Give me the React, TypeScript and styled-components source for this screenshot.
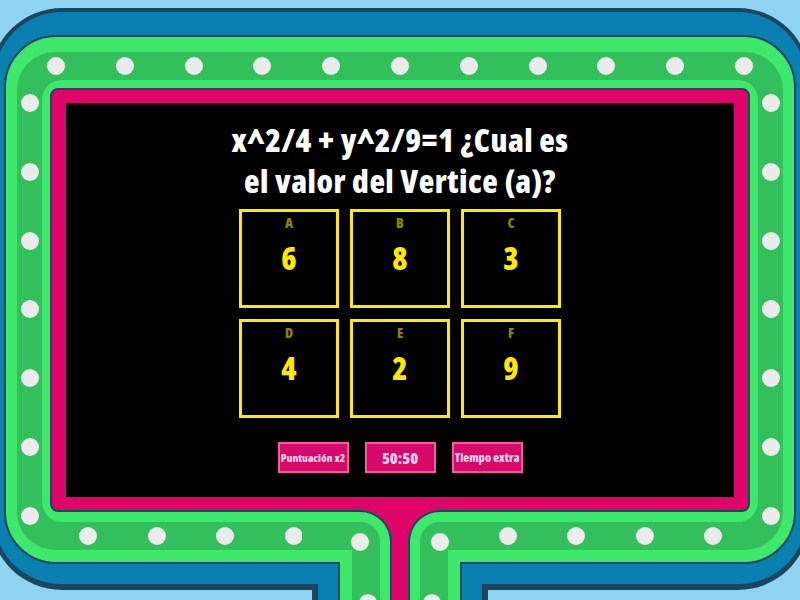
import React from 'react';
import styled, {createGlobalStyle} from "styled-components";

const GlobalStyle = createGlobalStyle`
  html, body {
    margin: 0;
    padding: 0;
    width: 800px;
    height: 600px;
    overflow: hidden;
    background: #8fd3f0;
  }
  * {
    box-sizing: border-box;
  }
`

const FONT = `"Open Sans", "DejaVu Sans", sans-serif`

const OUTLINE = '#1b4660'
const BLUE = '#0a80b1'
const LIGHT_GREEN = '#3de86a'
const DARK_GREEN = '#33bf5b'
const PINK = '#df0469'
const DOT = '#ebebeb'

type AnswerType = {
    letter: string
    value: string
}

const answers: AnswerType[] = [
    {letter: 'A', value: '6'},
    {letter: 'B', value: '8'},
    {letter: 'C', value: '3'},
    {letter: 'D', value: '4'},
    {letter: 'E', value: '2'},
    {letter: 'F', value: '9'},
]

const range = (n: number) => Array.from({length: n}, (_, i) => i)

// bottom centre: the pink stem going down between the two green legs
const pinkEdge = 'M 200 510 L 360 510 A 32 32 0 0 1 392 542 L 392 700 L 408 700 L 408 542 A 32 32 0 0 1 440 510 L 600 510'
const pinkFill = 'M 200 480 L 200 510 L 360 510 A 32 32 0 0 1 392 542 L 392 700 L 408 700 L 408 542 A 32 32 0 0 1 440 510 L 600 510 L 600 480 Z'

const layers: { d: number, color: string }[] = [
    {d: 80, color: OUTLINE},
    {d: 74, color: BLUE},
    {d: 54, color: OUTLINE},
    {d: 52, color: LIGHT_GREEN},
    {d: 40, color: DARK_GREEN},
    {d: 12, color: LIGHT_GREEN},
    {d: 2, color: OUTLINE},
]

const Legs = () => (
    <LegsSvg viewBox="302 497 196 103" width={196} height={103}>
        {layers.map(l => (
            <path key={l.d} d={pinkEdge} fill="none" stroke={l.color} strokeWidth={l.d * 2} strokeLinejoin="round"/>
        ))}
        <path d={pinkFill} fill={PINK}/>
        <circle cx={360} cy={542} r={9} fill={DOT}/>
        <circle cx={440} cy={542} r={9} fill={DOT}/>
        <circle cx={368} cy={603} r={9} fill={DOT}/>
        <circle cx={432} cy={603} r={9} fill={DOT}/>
    </LegsSvg>
)

const App = () => {
    return (
        <Stage>
            <GlobalStyle/>
            <BlueFrame>
                <GreenRing>
                    <DotBand>
                        <TopDots>
                            {range(11).map(i => <Dot key={i}/>)}
                        </TopDots>
                        <SideDots>
                            {range(7).map(i => <Dot key={i}/>)}
                        </SideDots>
                        <InnerRing>
                            <PinkPanel>
                                <Screen>
                                    <Question>
                                        x^2/4 + y^2/9=1 ¿Cual es<br/>el valor del Vertice (a)?
                                    </Question>
                                    <Answers>
                                        {answers.map(a => (
                                            <AnswerBox key={a.letter}>
                                                <Letter>{a.letter}</Letter>
                                                <Value>{a.value}</Value>
                                            </AnswerBox>
                                        ))}
                                    </Answers>
                                    <PowerUps>
                                        <PowerUp size={11}>Puntuación x2</PowerUp>
                                        <PowerUp size={16}>50:50</PowerUp>
                                        <PowerUp size={12}>Tiempo extra</PowerUp>
                                    </PowerUps>
                                </Screen>
                            </PinkPanel>
                        </InnerRing>
                        <SideDots>
                            {range(7).map(i => <Dot key={i}/>)}
                        </SideDots>
                        <BottomDots>
                            <DotGroup>
                                {range(4).map(i => <Dot key={i}/>)}
                            </DotGroup>
                            <DotGroup>
                                {range(4).map(i => <Dot key={i}/>)}
                            </DotGroup>
                        </BottomDots>
                    </DotBand>
                </GreenRing>
            </BlueFrame>
            <Legs/>
        </Stage>
    );
};

export default App;

const Stage = styled.div`
  position: relative;
  width: 800px;
  height: 600px;
  overflow: hidden;
  padding-top: 8px;
  background: #8fd3f0;
`

const BlueFrame = styled.div`
  margin: 0 -10px;
  height: 582px;
  background: ${BLUE};
  border: 4px solid ${OUTLINE};
  border-bottom-width: 6px;
  border-radius: 72px;
  padding: 23px 10px 20px;
`

const GreenRing = styled.div`
  height: 100%;
  background: ${LIGHT_GREEN};
  border: 2px solid ${OUTLINE};
  border-radius: 52px;
  padding: 15px 11px 12px;
`

const DotBand = styled.div`
  height: 100%;
  background: ${DARK_GREEN};
  border-radius: 38px;
  display: grid;
  grid-template-columns: 25px 1fr 25px;
  grid-template-rows: 28px 1fr 28px;
`

const Dot = styled.span`
  display: block;
  flex: none;
  width: 18px;
  height: 18px;
  border-radius: 50%;
  background: ${DOT};
`

const TopDots = styled.div`
  grid-column: 2;
  grid-row: 1;
  display: flex;
  justify-content: space-between;
  align-items: center;
  padding: 0 5px;
`

const SideDots = styled.div`
  grid-row: 2;
  display: flex;
  flex-direction: column;
  align-items: center;
  gap: 50.8px;
  padding-top: 14px;
  min-height: 0;
`

const BottomDots = styled.div`
  grid-column: 2;
  grid-row: 3;
  display: flex;
  justify-content: space-between;
  align-items: center;
  padding: 0 36px 0 37px;
`

const DotGroup = styled.div`
  display: flex;
  gap: 50.5px;
`

const InnerRing = styled.div`
  grid-column: 2;
  grid-row: 2;
  display: flex;
  background: ${LIGHT_GREEN};
  border-radius: 20px;
  padding: 8px 8px 10px;
`

const PinkPanel = styled.div`
  flex: 1;
  display: flex;
  background: ${PINK};
  border: 2px solid ${OUTLINE};
  border-radius: 8px;
  padding: 13px 14px;
`

const Screen = styled.div`
  flex: 1;
  display: flex;
  flex-direction: column;
  align-items: center;
  background: #000;
  padding-top: 16px;
  font-family: ${FONT};
  font-stretch: 75%;
`

const Question = styled.div`
  color: #fff;
  font-weight: 800;
  font-size: 32px;
  letter-spacing: 0.5px;
  line-height: 41px;
  text-align: center;
`

const Answers = styled.div`
  margin-top: 8px;
  display: grid;
  grid-template-columns: repeat(3, 100px);
  grid-auto-rows: 99px;
  gap: 11px;
`

const AnswerBox = styled.div`
  display: flex;
  flex-direction: column;
  align-items: center;
  border: 3px solid #ffea00;
  padding-top: 3px;
`

const Letter = styled.div`
  color: #8c8400;
  font-weight: 800;
  font-size: 14px;
  line-height: 16px;
`

const Value = styled.div`
  margin-top: 12px;
  color: #ffe800;
  font-weight: 800;
  font-size: 31px;
  line-height: 30px;
`

const PowerUps = styled.div`
  margin-top: 24px;
  display: flex;
  gap: 16px;
`

const PowerUp = styled.div<{ size: number }>`
  width: 71px;
  height: 31px;
  display: flex;
  align-items: center;
  justify-content: center;
  background: #d6086a;
  border: 2px solid #ef5f9c;
  color: #ffd3e6;
  font-weight: 800;
  font-size: ${props => props.size}px;
  white-space: nowrap;
`

const LegsSvg = styled.svg`
  position: absolute;
  left: 302px;
  top: 497px;
  display: block;
`
